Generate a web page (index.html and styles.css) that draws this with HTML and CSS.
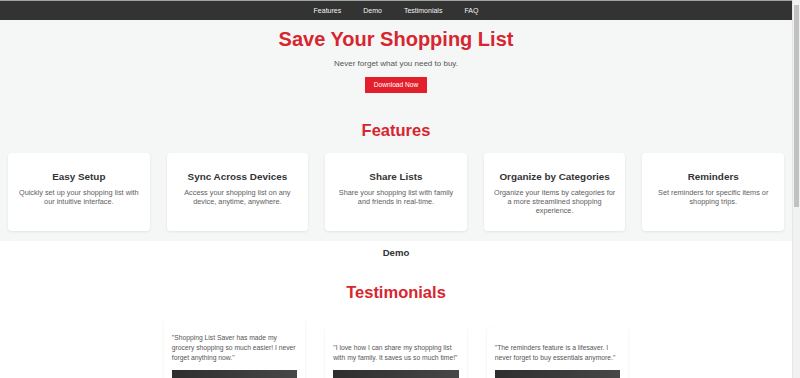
FILE: index.html
```html
<!DOCTYPE html>
<html lang="en">
<head>
    <meta charset="UTF-8">
    <meta name="viewport" content="width=device-width, initial-scale=1.0">
    <title>Shopping List Saver</title>
    <link rel="stylesheet" href="styles.css">
</head>
<body>
    <nav class="topnav">
        <a href="#features">Features</a>
        <a href="#demo">Demo</a>
        <a href="#testimonials">Testimonials</a>
        <a href="#faq">FAQ</a>
    </nav>

    <header class="hero">
        <h1>Save Your Shopping List</h1>
        <p>Never forget what you need to buy.</p>
        <a class="cta" href="#">Download Now</a>
    </header>

    <section id="features" class="features">
        <h2>Features</h2>
        <div class="feature-grid">
            <div class="feature">
                <h3>Easy Setup</h3>
                <p>Quickly set up your shopping list with our intuitive interface.</p>
            </div>
            <div class="feature">
                <h3>Sync Across Devices</h3>
                <p>Access your shopping list on any device, anytime, anywhere.</p>
            </div>
            <div class="feature">
                <h3>Share Lists</h3>
                <p>Share your shopping list with family and friends in real-time.</p>
            </div>
            <div class="feature">
                <h3>Organize by Categories</h3>
                <p>Organize your items by categories for a more streamlined shopping experience.</p>
            </div>
            <div class="feature">
                <h3>Reminders</h3>
                <p>Set reminders for specific items or shopping trips.</p>
            </div>
        </div>
    </section>

    <section id="demo" class="demo">
        <h2>Demo</h2>
    </section>

    <section id="testimonials" class="testimonials">
        <h2>Testimonials</h2>
        <div class="quote-row">
            <div class="quote">
                <p>"Shopping List Saver has made my grocery shopping so much easier! I never forget anything now."</p>
                <div class="shot"></div>
            </div>
            <div class="quote">
                <p>"I love how I can share my shopping list with my family. It saves us so much time!"</p>
                <div class="shot"></div>
            </div>
            <div class="quote">
                <p>"The reminders feature is a lifesaver. I never forget to buy essentials anymore."</p>
                <div class="shot"></div>
            </div>
        </div>
    </section>

    <section id="faq" class="faq">
        <h2>FAQ</h2>
        <div class="faq-item">
            <h3>Is Shopping List Saver free?</h3>
            <p>Yes, the basic version is free to download and use.</p>
        </div>
        <div class="faq-item">
            <h3>Can I use it offline?</h3>
            <p>Your lists are stored on your device and sync when you are back online.</p>
        </div>
        <div class="faq-item">
            <h3>How do I share a list?</h3>
            <p>Open a list, tap Share and invite family or friends.</p>
        </div>
    </section>

    <footer class="footer">
        &copy; 2024 Shopping List Saver. All rights reserved.
    </footer>

    <div class="scrollbar" aria-hidden="true"><div class="thumb"></div></div>
</body>
</html>
```

FILE: styles.css
```css
body {
    margin: 0;
    padding-right: 8px;
    font-family: "Liberation Sans", Arial, sans-serif;
    background-color: #fff;
    color: #333;
}
/* window scrollbar, drawn since the headless view hides it */
.scrollbar {
    position: fixed;
    top: 0;
    right: 0;
    width: 7px;
    height: 100%;
    background: #f1f1f1;
    border-left: 1px solid #e6e6e6;
}
.scrollbar .thumb {
    margin: 5px 0 0 1px;
    width: 5px;
    height: 202px;
    background: #c1c1c1;
}
.topnav {
    display: flex;
    justify-content: center;
    align-items: center;
    height: 19px;
    background-color: #333;
    border-top: 1px solid #9ba59b;
}
.topnav a {
    color: #f2f2f2;
    text-decoration: none;
    font-size: 7px;
    padding: 0 11px;
}
.hero {
    text-align: center;
    background-color: #f5f7f7;
    padding-top: 8px;
}
.hero h1 {
    margin: 0 0 8px;
    font-size: 20px;
    color: #d7262f;
}
.hero p {
    margin: 0 0 5px;
    font-size: 8px;
    color: #555;
}
.cta {
    display: inline-block;
    height: 16px;
    line-height: 16px;
    padding: 0 9px;
    font-size: 6.6px;
    color: #fff;
    background-color: #e41f2c;
    text-decoration: none;
}
.features {
    background-color: #f5f7f7;
    padding: 28px 8px 10px;
    text-align: center;
}
.features h2,
.testimonials h2,
.faq h2 {
    margin: 0;
    font-size: 16.5px;
    color: #d7262f;
}
.feature-grid {
    display: grid;
    grid-template-columns: repeat(5, 1fr);
    gap: 17px;
    margin-top: 13px;
}
.feature {
    background: #fff;
    border-radius: 4px;
    box-shadow: 0 1px 3px rgba(0,0,0,0.08);
    padding: 10px 9px 9px;
}
.feature h3 {
    margin: 8px 0 6px;
    font-size: 9.9px;
    color: #333;
}
.feature p {
    margin: 0 0 7px;
    font-size: 7.3px;
    line-height: 9px;
    color: #5e5e5e;
}
.demo {
    text-align: center;
    padding-top: 6px;
}
.demo h2 {
    margin: 0;
    font-size: 9.6px;
    color: #333;
}
.testimonials {
    text-align: center;
    padding-top: 25px;
    padding-bottom: 24px;
}
.quote-row {
    display: flex;
    justify-content: center;
    align-items: flex-end;
    gap: 20px;
    margin-top: 15px;
}
.quote {
    width: 141.5px;
    box-sizing: border-box;
    padding: 8px;
    background: #fff;
    border-radius: 4px;
    box-shadow: 0 1px 3px rgba(0,0,0,0.08);
    text-align: left;
}
.quote p {
    margin: 8px 0 7px;
    font-size: 6.75px;
    line-height: 10px;
    color: #555;
}
.shot {
    height: 71px;
    background: linear-gradient(90deg, #2e2e2e, #474747);
}
.faq {
    background-color: #f5f7f7;
    padding: 24px 0 20px;
    text-align: center;
}
.faq-item {
    max-width: 420px;
    margin: 12px auto 0;
    padding: 8px 10px;
    background: #fff;
    border-radius: 4px;
    text-align: left;
}
.faq-item h3 {
    margin: 0 0 4px;
    font-size: 9px;
    color: #333;
}
.faq-item p {
    margin: 0;
    font-size: 7.3px;
    color: #555;
}
.footer {
    background-color: #333;
    color: #eee;
    font-size: 7px;
    text-align: center;
    padding: 12px 0;
}
```
